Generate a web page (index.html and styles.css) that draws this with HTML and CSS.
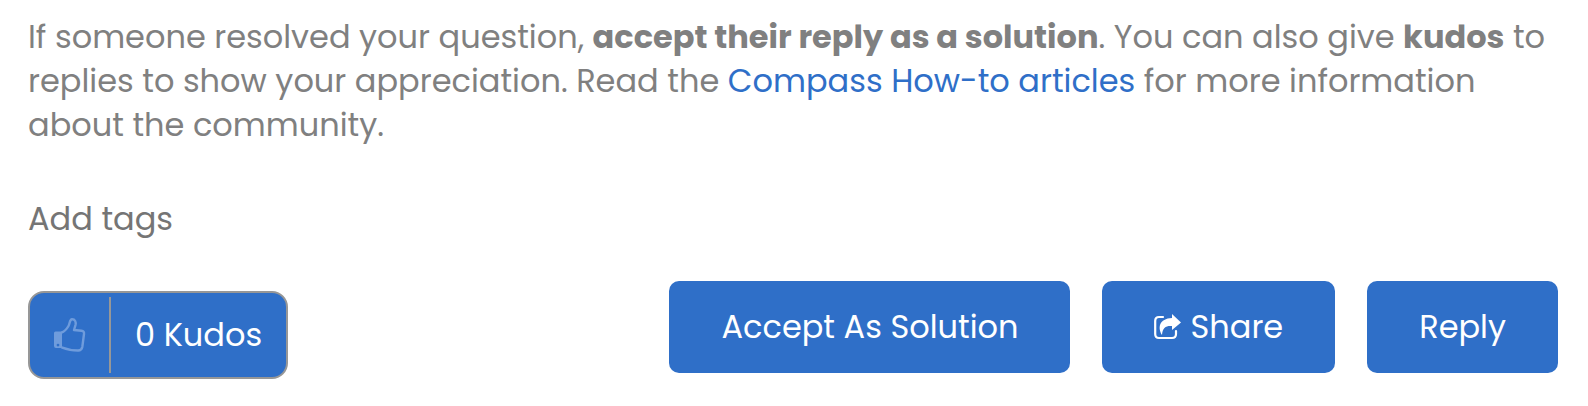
FILE: index.html
```html
<!DOCTYPE html>
<html lang="en">
<head>
<meta charset="utf-8">
<title>Compass community reply</title>
<link rel="stylesheet" href="styles.css">
</head>
<body>
<main class="post">
  <p class="note">If someone resolved your question, <strong>accept their reply as a solution</strong>. You can also give <strong>kudos</strong> to replies to show your appreciation. Read the <a class="link" href="#">Compass How-to articles</a> for more information about the community.</p>
  <a class="tags" href="#">Add tags</a>
  <div class="actions">
    <div class="kudos">
      <button class="kudos-give" type="button" aria-label="Give kudos">
        <svg class="thumb" viewBox="0 0 32 34" aria-hidden="true">
          <path fill="currentColor" fill-rule="evenodd" d="M1.5 13.5H8V30H2Q0 30 0 28V15Q0 13.5 1.5 13.5ZM4 25.7a1.4 1.4 0 1 0 0 2.8a1.4 1.4 0 1 0 0-2.8Z"/>
          <path fill="none" stroke="currentColor" stroke-width="2.4" stroke-linejoin="round" d="M7.500 14.500C11 13.500 13 10.500 14.500 8C16 5.500 15.500 1.500 18 1.300C21 1.200 22.300 4 21.500 7L20 12L27.500 12.700Q30.500 13 30 16L28.300 29Q27.500 32.600 24 32.500C18 32.500 13 31.300 7.500 29.300"/>
        </svg>
      </button>
      <span class="kudos-count">0 Kudos</span>
    </div>
    <div class="buttons">
      <button class="btn" type="button">Accept As Solution</button>
      <button class="btn" type="button">
        <svg class="share" viewBox="0 0 27 26" aria-hidden="true">
          <path fill="none" stroke="currentColor" stroke-width="2.2" stroke-linecap="round" d="M9 3H5Q1.200 3 1.200 7V20Q1.200 24 5 24H18Q22 24 22 20V17"/>
          <path fill="currentColor" d="M18 0L27 8.500L18 16V12C12 11.500 8.500 13.500 8 21C3.500 14 5 4.500 18 4Z"/>
        </svg>
        Share
      </button>
      <button class="btn" type="button">Reply</button>
    </div>
  </div>
</main>
</body>
</html>
```
FILE: styles.css
```css
* { box-sizing: border-box; }
body {
  margin: 0;
  background: #fff;
  color: #808080;
  font-family: Poppins, Inter, sans-serif;
  font-size: 32px;
  line-height: 44px;
}
.post {
  display: flex;
  flex-direction: column;
  align-items: stretch;
  padding: 15px 30px 26px 28px;
}
.note { margin: 0 0 50px; }
.link { color: #2f6fc8; text-decoration: none; }
.tags {
  align-self: flex-start;
  margin-bottom: 40px;
  color: #757575;
  text-decoration: none;
}
.actions {
  display: flex;
  justify-content: space-between;
  align-items: flex-start;
}
.kudos {
  display: flex;
  align-items: stretch;
  margin-top: 10px;
  padding: 4px 0;
  border: 2px solid #979797;
  border-radius: 16px;
  background: #2f6fc8;
  color: #fff;
}
.kudos-give {
  display: flex;
  align-items: center;
  padding: 0 23px 0 24px;
  border: 0;
  border-right: 2px solid #979797;
  background: none;
  color: #6f9cdc;
}
.thumb { width: 32px; height: 34px; }
.kudos-count { padding: 16px 24px; }
.buttons { display: flex; gap: 32px; }
.btn {
  display: flex;
  align-items: center;
  gap: 9px;
  padding: 24px 52px;
  border: 0;
  border-radius: 10px;
  background: #2f6fc8;
  color: #fff;
  font: inherit;
}
.share { width: 27px; height: 26px; }
```
